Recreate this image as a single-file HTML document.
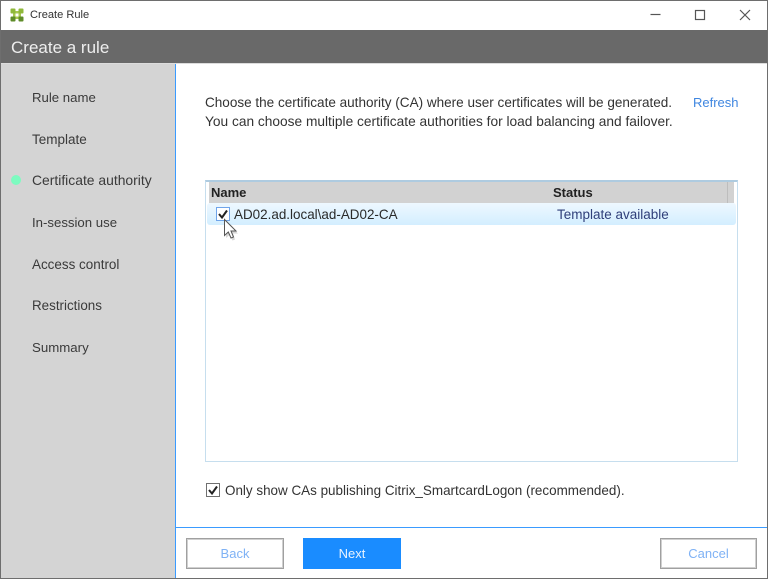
<!DOCTYPE html>
<html><head><meta charset="utf-8"><style>
html,body{margin:0;padding:0;width:768px;height:579px;overflow:hidden;background:#fff}
body{position:relative;font-family:"Liberation Sans",sans-serif;font-size:13px;color:#333}
div{position:absolute;box-sizing:border-box;white-space:nowrap}
.nav{left:32px;color:#3a3a3a;font-size:13px;line-height:16px}
.btn{top:538px;height:31px;text-align:center;line-height:29px;font-size:13px;color:#7fb2f5;border:1px solid #a0a0a0;box-shadow:inset 0 0 0 1px #d0d0d0;background:#fff}
</style></head><body>
<div style="left:0;top:0;width:768px;height:579px;border:1px solid #6e6e6e"></div>
<svg style="position:absolute;left:10px;top:8px" width="14" height="14" viewBox="0 0 14 14"><rect x="3" y="3" width="8" height="8" fill="#a8c850"/><g fill="#8fb83a"><rect x="0.500" y="0.500" width="5" height="5" rx="1"/><rect x="8.500" y="0.500" width="5" height="5" rx="1"/></g><g fill="#5f8c2a"><rect x="0.500" y="8.500" width="5" height="5" rx="1"/><rect x="8.500" y="8.500" width="5" height="5" rx="1"/></g><rect x="5.500" y="5.500" width="3" height="3" fill="#fff"/></svg>
<div style="left:30px;top:8px;font-size:11.100px;line-height:15px;color:#333">Create Rule</div>
<svg style="position:absolute;left:640px;top:4px" width="120" height="22" viewBox="0 0 120 22" fill="none" stroke="#555" stroke-width="1.200"><path d="M10.500 10.500H20.500"/><rect x="55.500" y="6.500" width="9" height="9"/><path d="M100 6L110 16M110 6L100 16"/></svg>
<div style="left:1px;top:30px;width:766px;height:33px;background:#696969;color:#eee;font-size:17px;line-height:35px;padding-left:10px">Create a rule</div>
<div style="left:1px;top:63px;width:766px;height:1px;background:#dcdcdc"></div>
<div style="left:1px;top:64px;width:174px;height:514px;background:#d4d4d4"></div>
<div style="left:175px;top:64px;width:1px;height:514px;background:#3a9bff"></div>
<div class="nav" style="top:90px;font-size:13.200px">Rule name</div>
<div class="nav" style="top:132px;font-size:13.500px">Template</div>
<div style="left:11px;top:175px;width:10px;height:10px;border-radius:50%;background:#7dfbc0"></div>
<div class="nav" style="top:172px;font-size:13.900px">Certificate authority</div>
<div class="nav" style="top:215px;font-size:13.200px">In-session use</div>
<div class="nav" style="top:257px;font-size:13.450px">Access control</div>
<div class="nav" style="top:298px;font-size:13.400px">Restrictions</div>
<div class="nav" style="top:340px;font-size:13.250px">Summary</div>
<div style="left:205px;top:95px;line-height:16px;font-size:13.540px;color:#333">Choose the certificate authority (CA) where user certificates will be generated.</div>
<div style="left:205px;top:114px;line-height:16px;font-size:13.720px;color:#333">You can choose multiple certificate authorities for load balancing and failover.</div>
<div style="left:693px;top:95px;line-height:16px;font-size:13px;color:#3f86e0">Refresh</div>
<div style="left:205px;top:180px;width:533px;height:282px;border:1px solid #c6deee;border-top:2px solid #aecbe0;background:#fff"></div>
<div style="left:209px;top:182px;width:525px;height:21px;background:#d2d2d2"></div>
<div style="left:727px;top:182px;width:1px;height:21px;background:#bdbdbd"></div>
<div style="left:211px;top:185px;font-weight:bold;font-size:13px;line-height:16px;color:#222">Name</div>
<div style="left:553px;top:185px;font-weight:bold;font-size:13px;line-height:16px;color:#222">Status</div>
<div style="left:207px;top:203px;width:529px;height:22px;border-radius:3px;background:linear-gradient(#eef8ff,#d3eeff)"></div>
<div style="left:216px;top:207px;width:14px;height:14px;background:#fff;border:1.500px solid #6fa4ea"></div>
<svg style="position:absolute;left:216px;top:207px" width="14" height="14" viewBox="0 0 14 14" fill="none" stroke="#222" stroke-width="2"><path d="M3 7L6 10.500L11 3.500"/></svg>
<div style="left:234px;top:207px;font-size:13.450px;line-height:16px;color:#2a2a2a">AD02.ad.local\ad-AD02-CA</div>
<div style="left:557px;top:207px;font-size:13.500px;line-height:16px;color:#2f3f7a">Template available</div>
<svg style="position:absolute;left:222px;top:218px" width="20" height="24" viewBox="0 0 20 24"><path d="M4 4V20L8 16.500L10.500 22.500L13 21.500L11 15.500L16 15.500Z" fill="#bbb" opacity=".6"/><path d="M2.500 1.500V17.500L6.300 14L9 20L11.500 19L9 13L14 13Z" fill="#fff" stroke="#555" stroke-width="1"/></svg>
<div style="left:206px;top:483px;width:14px;height:14px;background:#fff;border:1px solid #707070"></div>
<svg style="position:absolute;left:206px;top:483px" width="14" height="14" viewBox="0 0 14 14" fill="none" stroke="#222" stroke-width="2"><path d="M3 7L6 10.500L11 3.500"/></svg>
<div style="left:225px;top:483px;font-size:13.450px;line-height:16px;color:#333">Only show CAs publishing Citrix_SmartcardLogon (recommended).</div>
<div style="left:176px;top:527px;width:591px;height:1px;background:#3a9bff"></div>
<div class="btn" style="left:186px;width:98px">Back</div>
<div class="btn" style="left:303px;width:98px;background:#1a8cff;border-color:#1a8cff;box-shadow:none;color:#e8f3ff">Next</div>
<div class="btn" style="left:660px;width:97px">Cancel</div>
</body></html>
